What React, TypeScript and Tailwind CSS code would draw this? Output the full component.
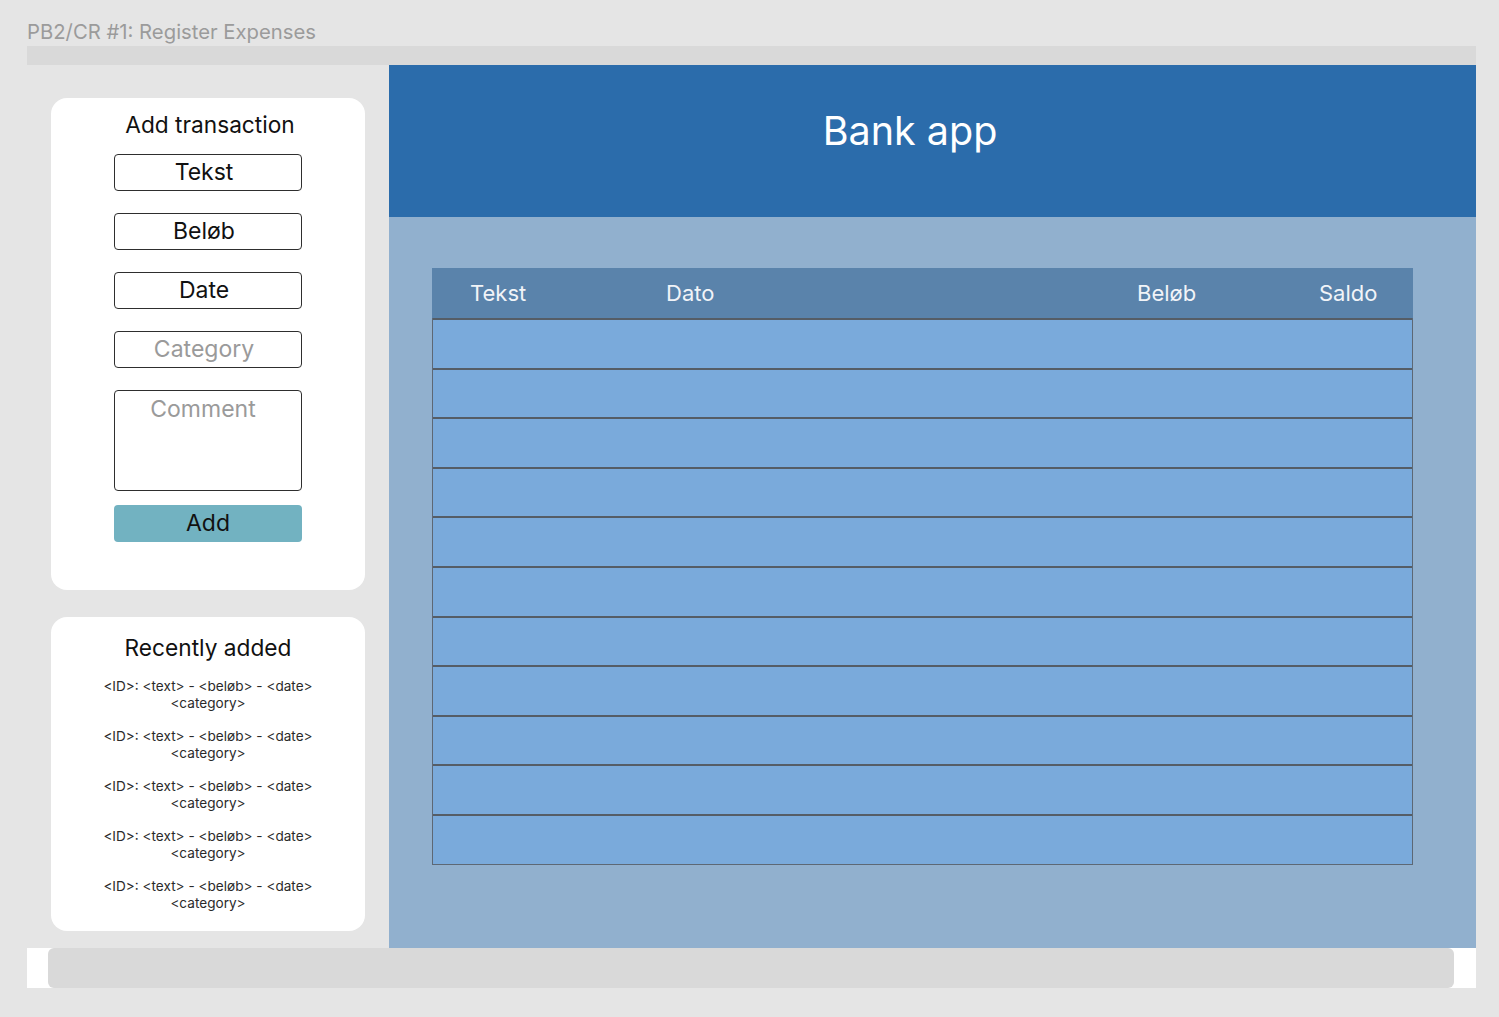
import React from 'react';

const headers = [
  { label: 'Tekst', width: 'w-[196px]' },
  { label: 'Dato', width: 'w-[471px]' },
  { label: 'Beløb', width: 'w-[182px]' },
  { label: 'Saldo', width: 'w-[80px]' },
];

const fields = [
  { label: 'Tekst', muted: false },
  { label: 'Beløb', muted: false },
  { label: 'Date', muted: false },
  { label: 'Category', muted: true },
];

const rows = Array.from({ length: 11 }, (_, i) => i);
const recent = Array.from({ length: 5 }, (_, i) => i);

const AddTransaction: React.FC = () => (
  <div className="h-[492px] w-[314px] rounded-[16px] bg-white pt-[13px] flex flex-col items-center">
    <h2 className="pl-[4px] text-[22.7px] leading-[28px] text-[#111]">Add transaction</h2>
    <div className="mt-[15px] flex flex-col gap-[22px]">
      {fields.map((f) => (
        <div
          key={f.label}
          className={`h-[37px] w-[188px] rounded-[4px] border-[1.5px] border-[#2e2e2e] pr-[8px] flex items-center justify-center text-[23px] ${
            f.muted ? 'text-[#9a9a9a]' : 'text-[#111]'
          }`}
        >
          {f.label}
        </div>
      ))}
      {/* Comment */}
      <div className="h-[101px] w-[188px] rounded-[4px] border-[1.5px] border-[#2e2e2e] pt-[4px] pr-[10px] text-center text-[23px] leading-[28px] text-[#9a9a9a]">
        Comment
      </div>
    </div>
    <button className="mt-[14px] h-[37px] w-[188px] rounded-[4px] bg-[#72b2c1] text-[23px] text-[#111]">
      Add
    </button>
  </div>
);

const RecentlyAdded: React.FC = () => (
  <div className="mt-[27px] h-[314px] w-[314px] rounded-[16px] bg-white pt-[18px] flex flex-col items-center">
    <h2 className="text-[22.7px] leading-[26px] text-[#111]">Recently added</h2>
    <div className="mt-[17px] flex flex-col gap-[16px]">
      {recent.map((i) => (
        <div key={i} className="text-center text-[13.6px] leading-[17px] text-[#2a2a2a]">
          <p>{'<ID>: <text> - <beløb> - <date>'}</p>
          <p>{'<category>'}</p>
        </div>
      ))}
    </div>
  </div>
);

const App: React.FC = () => {
  return (
    <div className="min-h-screen bg-[#e5e5e5] font-['Inter','Noto_Sans',sans-serif]">
      <div className="pl-[27px] pt-[20px] text-[20.3px] leading-[24px] text-[#9b9b9b]">
        PB2/CR #1: Register Expenses
      </div>

      <div className="ml-[27px] mt-[2px] w-[1449px]">
        {/* Top bar */}
        <div className="h-[19px] bg-[#d9d9d9]" />

        <div className="flex h-[883px]">
          {/* Left column */}
          <div className="w-[362px] pl-[24px] pt-[33px]">
            <AddTransaction />
            <RecentlyAdded />
          </div>

          {/* Bank app */}
          <div className="flex-1 bg-[#91b0ce]">
            <div className="h-[152px] bg-[#2b6cab] pt-[43px] pr-[45px] text-center text-[39.5px] leading-[46px] text-white">
              Bank app
            </div>

            <div className="ml-[43px] mt-[51px] w-[981px]">
              <div className="flex h-[50px] items-center bg-[#5a83ab] pl-[38px] text-[22px] text-[#f1f4f8]">
                {headers.map((h) => (
                  <span key={h.label} className={h.width}>
                    {h.label}
                  </span>
                ))}
              </div>
              <div className="border-x border-b border-[#5d6875]">
                {rows.map((r) => (
                  <div key={r} className="h-[49.6px] border-t-2 border-[#555d66] bg-[#7aaadb]" />
                ))}
              </div>
            </div>
          </div>
        </div>

        {/* Bottom bar */}
        <div className="h-[40px] bg-white pl-[21px] pr-[22px]">
          <div className="h-full rounded-[6px] bg-[#d9d9d9]" />
        </div>
      </div>
    </div>
  );
};

export default App;
